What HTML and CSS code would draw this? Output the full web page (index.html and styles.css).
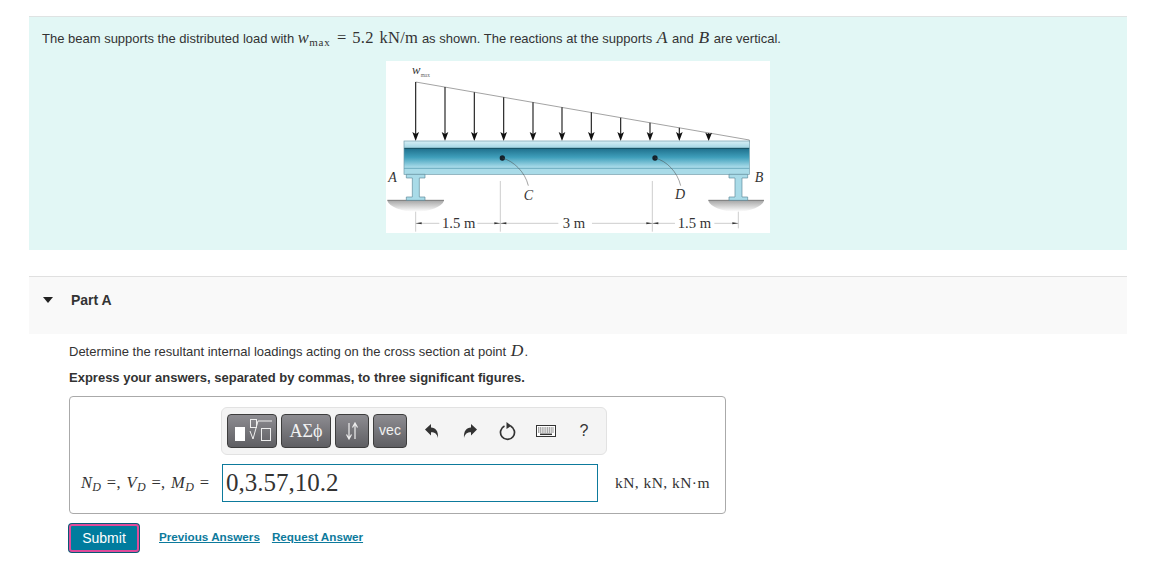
FILE: index.html
```html
<!DOCTYPE html>
<html lang="en">
<head>
<meta charset="utf-8">
<title>Beam problem</title>
<link rel="stylesheet" href="styles.css">
</head>
<body>
<main class="page">
  <section class="intro">
    <p class="intro-text">The beam supports the distributed load with <span class="math math-load"><i>w</i><sub>max</sub> = 5.2 kN/m</span> as shown. The reactions at the supports <i class="math math-var">A</i> and <i class="math math-var">B</i> are vertical.</p>
    <svg class="figure" width="384" height="172" viewBox="0 0 384 172" xmlns="http://www.w3.org/2000/svg">
      <defs>
        <linearGradient id="web" x1="0" y1="0" x2="0" y2="1">
          <stop offset="0" stop-color="#1f6f8c"/>
          <stop offset=".45" stop-color="#3f9fbb"/>
          <stop offset="1" stop-color="#b4e2ee"/>
        </linearGradient>
        <linearGradient id="flange" x1="0" y1="0" x2="0" y2="1">
          <stop offset="0" stop-color="#d8f0f6"/>
          <stop offset="1" stop-color="#9fd3e2"/>
        </linearGradient>
        <linearGradient id="shadow" x1="0" y1="0" x2="0" y2="1">
          <stop offset="0" stop-color="#a8a8a8"/>
          <stop offset="1" stop-color="#ffffff"/>
        </linearGradient>
      </defs>
      <g transform="translate(-6 -6) scale(.33333)">
        <path d="M107 81 L1108 255 V262" class="thin"/>
        <g class="arrows">
          <path d="M107 81V240"/><path d="M195 96V240"/><path d="M283 112V240"/><path d="M371 127V240"/><path d="M459 142V240"/><path d="M546 157V240"/><path d="M634 172V240"/><path d="M722 188V240"/><path d="M810 203V240"/><path d="M898 218V240"/><path d="M986 234V240"/>
        </g>
        <g class="heads">
          <path d="M97 231L107 258L117 231L107 237Z"/><path d="M185 231L195 258L205 231L195 237Z"/><path d="M273 231L283 258L293 231L283 237Z"/><path d="M361 231L371 258L381 231L371 237Z"/><path d="M449 231L459 258L469 231L459 237Z"/><path d="M536 231L546 258L556 231L546 237Z"/><path d="M624 231L634 258L644 231L634 237Z"/><path d="M712 231L722 258L732 231L722 237Z"/><path d="M800 231L810 258L820 231L810 237Z"/><path d="M888 231L898 258L908 231L898 237Z"/><path d="M976 233L986 258L996 233L986 238Z"/>
        </g>
        <rect x="72" y="258" width="1036" height="22" fill="url(#flange)"/>
        <rect x="72" y="280" width="1036" height="60" fill="url(#web)"/>
        <rect x="72" y="340" width="1036" height="18" fill="#a9dbe8"/>
        <path d="M72 280H1108" class="beamline"/>
        <path d="M72 340H1108" class="beamline2"/>
        <rect x="72" y="258" width="1036" height="100" class="outline"/>
        <path d="M22 437H192C186 455 150 470 107 470C64 470 28 455 22 437Z" fill="url(#shadow)"/>
        <path d="M985 437H1152C1146 455 1110 470 1068 470C1026 470 991 455 985 437Z" fill="url(#shadow)"/>
        <path d="M22 436H192M985 436H1152" class="ground"/>
        <path class="support" d="M79 358H135V369H118V426H135V436H79V426H97V369H79Z"/>
        <path class="support" d="M1047 358H1103V369H1086V426H1103V436H1047V426H1065V369H1047Z"/>
        <circle cx="367" cy="309" r="8" fill="#15212a"/>
        <circle cx="825" cy="309" r="8" fill="#15212a"/>
        <path class="thin" d="M367 309C400 318 435 350 445 392M825 309C860 318 892 350 902 392"/>
        <path class="dim" d="M107 470V530M361 378V530M817 378V530M1075 470V520"/>
        <path class="dim" d="M107 505H178M292 505H361M361 505H535M636 505H817M817 505H885M1003 505H1075"/>
        <path class="tick" d="M107 505l18-3v6ZM361 505l-18-3v6ZM361 505l18-3v6ZM817 505l-18-3v6ZM817 505l18-3v6ZM1075 505l-18-3v6Z"/>
        <text x="96" y="56" class="fig-i fig-big">w</text>
        <text x="122" y="66" class="fig-sub">max</text>
        <text x="25" y="380" class="fig-i fig-label">A</text>
        <text x="1124" y="380" class="fig-i fig-label">B</text>
        <text x="431" y="434" class="fig-i fig-label">C</text>
        <text x="885" y="432" class="fig-i fig-label">D</text>
        <text x="186" y="518" class="fig-n">1.5 m</text>
        <text x="548" y="518" class="fig-n">3 m</text>
        <text x="893" y="518" class="fig-n">1.5 m</text>
      </g>
    </svg>
  </section>

  <header class="part-head">
    <svg class="caret" width="10" height="6" viewBox="0 0 10 6" xmlns="http://www.w3.org/2000/svg"><path d="M0 0H10L5 6Z"/></svg>
    <h2 class="part-title">Part A</h2>
  </header>

  <section class="part-body">
    <p class="question">Determine the resultant internal loadings acting on the cross section at point <i class="math math-var">D</i>.</p>
    <p class="instruction">Express your answers, separated by commas, to three significant figures.</p>

    <div class="answer">
      <div class="toolbar">
        <button class="tb tb-templates" type="button" aria-label="Templates">
          <svg width="44" height="26" viewBox="0 0 44 26" xmlns="http://www.w3.org/2000/svg">
            <rect x="5" y="9" width="10" height="14" fill="#fff"/>
            <path d="M20 13l3 8 5-18h14" fill="none" stroke="#eee" stroke-width="1"/>
            <rect x="20.500" y="1.500" width="6" height="8" fill="none" stroke="#eee"/>
            <rect x="31.500" y="10.500" width="9" height="12" fill="none" stroke="#eee"/>
          </svg>
        </button>
        <button class="tb tb-greek" type="button">ΑΣϕ</button>
        <button class="tb tb-arrows" type="button" aria-label="Subscript and superscript">
          <svg width="14" height="18" viewBox="0 0 14 18" xmlns="http://www.w3.org/2000/svg">
            <path d="M4 1V16M1.500 12.500L4 17L6.500 12.500M10 17V2M7.500 5.500L10 1L12.500 5.500" fill="none" stroke="#eee" stroke-width="1.200"/>
          </svg>
        </button>
        <button class="tb tb-vec" type="button">vec</button>
        <div class="tools">
          <svg class="tool" width="16" height="16" viewBox="0 0 16 16" xmlns="http://www.w3.org/2000/svg"><path d="M1 6.500L7 1V4.500C11.500 4.500 14.500 8 14 15C13 11 11 9.300 7 9.300V12.500Z" fill="#333"/></svg>
          <svg class="tool" width="16" height="16" viewBox="0 0 16 16" xmlns="http://www.w3.org/2000/svg"><path d="M15 6.500L9 1V4.500C4.500 4.500 1.500 8 2 15C3 11 5 9.300 9 9.300V12.500Z" fill="#333"/></svg>
          <svg class="tool" width="18" height="20" viewBox="0 0 18 20" xmlns="http://www.w3.org/2000/svg"><path d="M11.500 5A7 7 0 1 1 5.500 5" fill="none" stroke="#333" stroke-width="1.700"/><path d="M7.500 1L12.500 4.800L7.500 8Z" fill="#333"/></svg>
          <svg class="tool" width="20" height="12" viewBox="0 0 20 12" xmlns="http://www.w3.org/2000/svg"><rect x=".5" y=".5" width="19" height="11" fill="#fff" stroke="#333"/><path d="M2 3H18M2 5H18M2 7H18" stroke="#555" stroke-width="1.200" stroke-dasharray="1.200 .6"/><path d="M4 9.300H16" stroke="#333" stroke-width="1.500"/></svg>
          <span class="tool tool-help">?</span>
        </div>
      </div>
      <div class="answer-row">
        <span class="answer-label math"><i>N<sub>D</sub></i> =, <i>V<sub>D</sub></i> =, <i>M<sub>D</sub></i> =</span>
        <input class="answer-input" type="text" value="0,3.57,10.2" aria-label="Answer">
        <span class="answer-units math">kN, kN, kN·m</span>
      </div>
    </div>

    <div class="actions">
      <button class="submit" type="button">Submit</button>
      <a class="action-link" href="#">Previous Answers</a>
      <a class="action-link" href="#">Request Answer</a>
    </div>
  </section>
</main>
</body>
</html>
```
FILE: styles.css
```css
* { box-sizing: border-box; }
html, body { margin: 0; padding: 0; background: #fff; }
body {
  font-family: "Liberation Sans", Arial, sans-serif;
  font-size: 13px;
  color: #333;
  height: 565px;
  overflow: hidden;
}
.page { margin: 16px 41px 0 29px; }
.math { font-family: "Liberation Serif", "Times New Roman", serif; font-size: 15.500px; }
.math-load { font-size: 16.500px; letter-spacing: .3px; word-spacing: 1.200px; }
.math-load sub { margin-right: 1px; letter-spacing: .8px; }
.math-var { font-size: 17.500px; padding: 0 1px; }
sub { font-size: 11px; line-height: 0; vertical-align: -3px; }

.intro {
  background: #e2f7f5;
  border-top: 1px solid #dfe3e3;
  height: 234px;
  padding: 12px 13px 0;
}
.intro-text { margin: 0; line-height: 17px; height: 32px; }
.figure { display: block; margin-left: 344px; background: #fff; }

.thin { fill: none; stroke: #444; stroke-width: 1.500; }
.arrows path { stroke: #222; stroke-width: 3.500; fill: none; }
.heads path { fill: #111; }
.beamline { stroke: #0c4658; stroke-width: 3; }
.beamline2 { stroke: #3e8da6; stroke-width: 2; }
.outline { fill: none; stroke: #6f9aa8; stroke-width: 2; }
.ground { stroke: #333; stroke-width: 2; fill: none; }
.support { fill: #a9dbe8; stroke: #5d8a99; stroke-width: 2; }
.dim { stroke: #b5b5b5; stroke-width: 2; fill: none; }
.tick { fill: #333; }
text { font-family: "Liberation Serif", serif; fill: #333; }
.fig-i { font-style: italic; }
.fig-big { font-size: 38px; }
.fig-sub { font-size: 16px; fill: #666; }
.fig-label { font-size: 42px; }
.fig-n { font-size: 44px; }

.part-head {
  margin-top: 26px;
  height: 58px;
  background: #f9f9f9;
  border-top: 1px solid #e0e0e0;
  display: flex;
  align-items: flex-start;
  padding: 16px 0 0 14px;
}
.caret { fill: #222; margin-top: 4px; }
.part-title { margin: 0 0 0 18px; font-size: 14px; line-height: 15px; font-weight: bold; color: #333; }

.part-body { padding: 7px 0 0 40px; }
.question { margin: 0; line-height: 19px; }
.instruction { margin: 7px 0 0; font-weight: bold; line-height: 19px; }

.answer {
  margin-top: 9px;
  width: 657px;
  height: 118px;
  border: 1px solid #aaa;
  border-radius: 4px;
  padding: 10px 0 0 11px;
}
.toolbar {
  margin-left: 140px;
  width: 386px;
  height: 48px;
  background: #f4f4f4;
  border: 1px solid #e2e2e2;
  border-radius: 6px;
  display: flex;
  align-items: center;
  gap: 4px;
  padding: 0 0 0 5px;
}
.tb {
  height: 34px;
  padding: 0;
  border: 1px solid #3d3d3d;
  border-radius: 4px;
  background: linear-gradient(#8d8c91, #5f5f63);
  color: #f2f2f2;
  display: flex;
  align-items: center;
  justify-content: center;
}
.tb-templates { width: 50px; }
.tb-greek { width: 50px; font-family: "Liberation Serif", serif; font-size: 18px; }
.tb-arrows { width: 34px; }
.tb-vec { width: 34px; font-family: "Liberation Sans", sans-serif; font-size: 14px; padding-bottom: 3px; }
.tools {
  display: grid;
  grid-template-columns: repeat(5, 38px);
  justify-items: center;
  align-items: center;
  margin-left: 2px;
}
.tool-help { font-size: 16px; color: #333; }

.answer-row { display: flex; align-items: center; margin-top: 9px; height: 38px; }
.answer-label { width: 141px; color: #333; font-size: 16.500px; letter-spacing: .35px; word-spacing: 1px; white-space: nowrap; }
.answer-label sub { font-size: 12px; }
.answer-input {
  width: 376px;
  height: 38px;
  border: 1px solid #0d7a9c;
  padding: 0 3px;
  font-family: "Liberation Serif", serif;
  font-size: 25px;
  letter-spacing: 0;
  color: #333;
  background: #fff;
  outline: none;
  border-radius: 0;
}
.answer-units { margin-left: 17px; font-size: 15.500px; letter-spacing: .45px; white-space: nowrap; }

.actions { display: flex; align-items: center; margin-top: 10px; gap: 12px; }
.submit {
  width: 70px;
  height: 28px;
  padding: 0;
  border: 2px solid #e04a9a;
  border-radius: 3px;
  background: #007c9e;
  box-shadow: 0 0 0 1px #075a75;
  color: #fff;
  font-family: "Liberation Sans", sans-serif;
  font-size: 14px;
  margin-right: 8px;
}
.action-link { color: #0d7a9c; font-weight: bold; font-size: 11.700px; text-decoration: underline; margin-bottom: 4px; }
```
